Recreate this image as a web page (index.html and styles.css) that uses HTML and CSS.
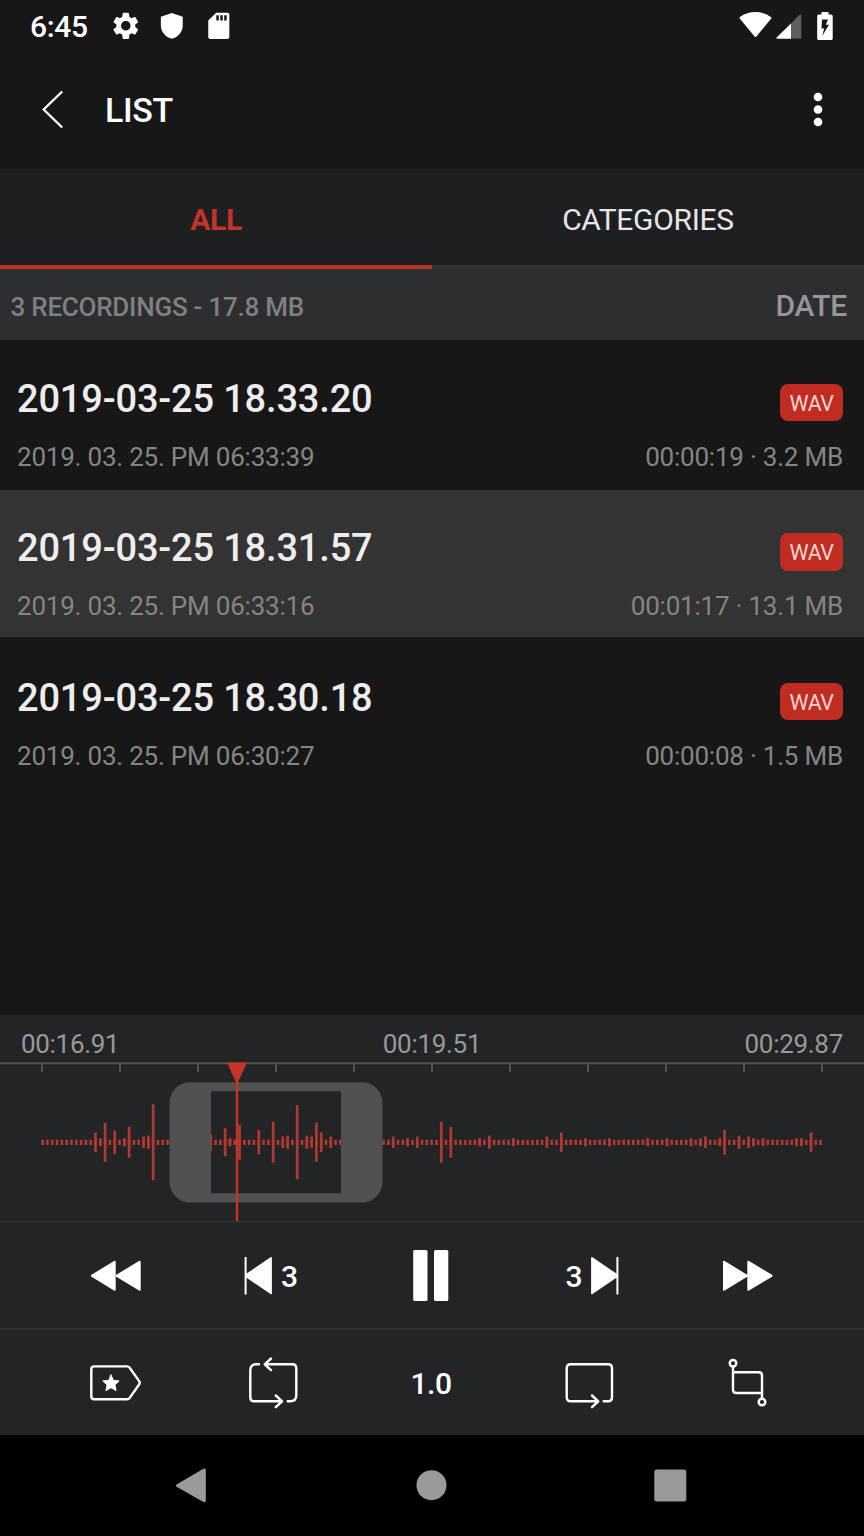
FILE: index.html
```html
<!DOCTYPE html>
<html lang="en">
<head>
<meta charset="utf-8">
<title>Recordings</title>
<link rel="stylesheet" href="styles.css">
</head>
<body>
<div class="status">
  <span class="clock">6:45</span>
  <svg class="sicon" viewBox="0 0 24 24"><path d="M19.14 12.94c.04-.3.06-.61.06-.94 0-.32-.02-.64-.07-.94l2.03-1.58c.18-.14.23-.41.12-.61l-1.92-3.32c-.12-.22-.37-.29-.59-.22l-2.39.96c-.5-.38-1.03-.7-1.62-.94L14.4 2.81c-.04-.24-.24-.81-.48-.81h-3.84c-.24 0-.43.57-.47.81L9.25 5.35c-.59.24-1.13.57-1.62.94l-2.39-.96c-.22-.08-.47 0-.59.22L2.740 8.870c-.12.21-.08.47.12.61l2.03 1.58c-.05.3-.09.63-.09.94s.02.64.07.94l-2.03 1.58c-.18.14-.23.41-.12.61l1.92 3.32c.12.22.37.29.59.22l2.39-.96c.5.38 1.03.7 1.62.94l.36 2.54c.05.24.24.81.48.81h3.84c.24 0 .44-.57.47-.81l.36-2.54c.59-.24 1.13-.56 1.62-.94l2.39.96c.22.08.47 0 .59-.22l1.92-3.32c.12-.22.07-.47-.12-.61l-2.01-1.58zM12 15.6c-1.98 0-3.6-1.62-3.6-3.6s1.62-3.6 3.6-3.6 3.6 1.62 3.6 3.6-1.62 3.6-3.6 3.6z"/></svg>
  <svg class="sicon" viewBox="0 0 24 24"><path d="M12 2.200l8.300 3v6.300c0 5-3.400 9-8.300 10.400-4.900-1.400-8.300-5.400-8.300-10.400V5.200z"/></svg>
  <svg class="sicon" viewBox="0 0 24 24"><path fill-rule="evenodd" d="M18.600 2H10L4 8v12.600c0 .8.600 1.400 1.400 1.400h13.200c.8 0 1.400-.6 1.400-1.400V3.400c0-.8-.6-1.400-1.400-1.400zM12 8h-1.900V4H12zm3 0h-1.900V4H15zm3 0h-1.900V4H18z"/></svg>
  <span class="spacer"></span>
  <svg class="wifi" viewBox="0 0 33 28"><path d="M.8 6Q8 1 16.500 1T32.200 6.200q.4.700 0 1.300L17.600 25.300q-1.100 1.200-2.200 0L.7 7.500Q.3 6.700.8 6z"/></svg>
  <svg class="signal" viewBox="0 0 26 28"><path d="M15 11.500L23.500 2.700q1.800-1.400 1.800.7V26.500H15z" fill="#5e5e5e"/><path d="M15 11.500L.6 25.400q-.5 1.300.8 1.300H15z"/></svg>
  <svg class="battery" viewBox="0 0 18 30"><path fill-rule="evenodd" d="M5.500 1h7v2.500h2.700q1.500 0 1.500 1.500v22.500q0 1.500-1.500 1.500H2.700q-1.500 0-1.500-1.500V5q0-1.500 1.500-1.500h2.800zM6 8.500L5.500 17.500H8.200L6.200 25 13 13.800H9.900L12 8.500z"/></svg>
</div>
<header class="appbar">
  <svg class="back" viewBox="0 0 24 40"><path d="M22.200 1.500L3.700 19.500 22.200 37.500"/></svg>
  <h1>LIST</h1>
  <span class="spacer"></span>
  <svg class="more" viewBox="0 0 10 36"><circle cx="5" cy="5" r="4.300"/><circle cx="5" cy="17.500" r="4.300"/><circle cx="5" cy="30" r="4.300"/></svg>
</header>
<nav class="tabs">
  <div class="tab active">ALL</div>
  <div class="tab">CATEGORIES</div>
</nav>
<div class="summary"><span>3 RECORDINGS - 17.8 MB</span><span class="sort">DATE</span></div>
<main class="list">
  <div class="row">
    <div class="line"><span class="name">2019-03-25 18.33.20</span><span class="badge">WAV</span></div>
    <div class="line meta"><span>2019. 03. 25. PM 06:33:39</span><span>00:00:19 · 3.2 MB</span></div>
  </div>
  <div class="row selected">
    <div class="line"><span class="name">2019-03-25 18.31.57</span><span class="badge">WAV</span></div>
    <div class="line meta"><span>2019. 03. 25. PM 06:33:16</span><span>00:01:17 · 13.1 MB</span></div>
  </div>
  <div class="row">
    <div class="line"><span class="name">2019-03-25 18.30.18</span><span class="badge">WAV</span></div>
    <div class="line meta"><span>2019. 03. 25. PM 06:30:27</span><span>00:00:08 · 1.5 MB</span></div>
  </div>
</main>
<section class="player">
  <div class="times"><span>00:16.91</span><span>00:19.51</span><span>00:29.87</span></div>
  <svg class="wave" viewBox="0 0 864 159">
    <path d="M0 1.200H864" stroke="#505153" stroke-width="2"/>
    <path d="M42 2v8M120 2v8M198 2v8M276 2v8M354 2v8M432 2v8M510 2v8M588 2v8M666 2v8M744 2v8M822 2v8" stroke="#505153" stroke-width="2"/>
    <!-- quiet samples, then the louder ones at one unit per sample -->
    <g transform="translate(42.700 80.300) scale(4.802 1)" class="bars">
      <path d="M-.28 0H162.300" stroke-width="5.200" stroke-dasharray=".54 .46"/>
      <path stroke-width=".56" d="M11-9.700v19.400M12-4v8M13-19.500v39M15-11.700v23.400M17-4v8M18-15.500v31M21-5.700v11.400M22-6.500v13M23-38v76M35-8.500v17M38-14v28M39-4v8M41-17.500v35M45-12.300v24.600M48-20.500v41M50-5.700v11.400M51-6.500v13M53-37v74M55-6.500v13M56-5.700v11.400M57-19.500v39M58-9.700v19.400M60-5.700v11.400M73-5.700v11.400M76-4v8M78-5.700v11.400M83-20.500v41M85-15.500v31M91-4v8M93-6.500v13M98-4v8M105-5.700v11.400M108-9.700v19.400M113-4v8M118-4v8M126-4v8M130-4v8M135-4v8M137-4v8M138-5.700v11.400M141-4v8M142-12.500v25M145-6.500v13M147-5.700v11.400M148-4v8M150-4v8M157-4v8M158-4v8M160-9.700v19.400"/>
    </g>
    <path fill="#515151" fill-rule="evenodd" d="M190 20.300H362a20.500 20.500 0 0 1 20.500 20.500V120a20.500 20.500 0 0 1-20.500 20.500H190a20.500 20.500 0 0 1-20.500-20.500V40.800A20.500 20.500 0 0 1 190 20.300zM211 29.200V131.300H341V29.200z"/>
    <path fill="#c63427" d="M227 .5h20L238.200 20V159h-2.400V20z"/>
  </svg>
  <div class="controls">
    <div class="btn"><svg viewBox="0 0 80 80"><path d="M15.500 38.800L38 25q1.700-.7 1.700 1V53.500q0 1.700-1.700 1L15.500 40.700q-1.200-1 0-1.900zM40.300 38.800L63 25q1.700-.7 1.700 1V53.500q0 1.700-1.700 1L40.300 40.700q-1.200-1 0-1.900z"/></svg></div>
    <div class="btn skip-back"><svg class="skip" viewBox="0 0 28 80"><path d="M.6 21H2.600V37.600L26.500 21.200q1.400-.6 1.400.8V57.200q0 1.400-1.400.8L2.600 41.800V58.500H.6z"/></svg><span>3</span></div>
    <div class="btn"><svg viewBox="0 0 80 80"><rect x="21.200" y="14" width="14.300" height="51" rx="1.500"/><rect x="42" y="14" width="14.300" height="51" rx="1.500"/></svg></div>
    <div class="btn skip-next"><span>3</span><svg class="skip" viewBox="0 0 28 80"><path d="M27.400 21H25.400V37.600L1.500 21.200Q.1 20.600.1 22V57.200q0 1.400 1.400.8L25.400 41.800V58.500h2z"/></svg></div>
    <div class="btn"><svg viewBox="0 0 80 80"><path d="M64 38.800L41 25q-1.700-.7-1.700 1V53.500q0 1.700 1.700 1L64 40.700q1.200-1 0-1.900zM39.200 38.800L16.700 25q-1.700-.7-1.700 1V53.500q0 1.700 1.700 1L39.200 40.700q1.200-1 0-1.900z"/></svg></div>
  </div>
  <div class="controls tools">
    <div class="btn"><svg class="stroke" viewBox="0 0 80 80"><path d="M18.300 23.400H51q1.700 0 2.700 1.300L63.300 38.400q.9 1.400 0 2.800L53.700 54.900q-1 1.300-2.700 1.300H18.300q-3 0-3-3V26.400q0-3 3-3z"/><path class="solid" d="M35 32l2.400 5.300 5.800.7-4.300 3.900 1.200 5.700-5.100-2.900-5.100 2.900 1.200-5.700-4.300-3.900 5.800-.7z"/></svg></div>
    <div class="btn"><svg class="stroke" viewBox="0 0 80 80"><path d="M25 21.300h-2.700q-6 0-6 6V54.300q0 4 4 4H48M37 15.500L30.700 21.300 37 27.100M31 21.300H58.300q4 0 4 4V52.300q0 6-6 6H53.700M41.800 52.500L48.100 58.300 41.800 64.100"/></svg></div>
    <div class="btn speed"><span>1.0</span></div>
    <div class="btn"><svg class="stroke" viewBox="0 0 80 80"><path d="M48 58.300H20.700q-4 0-4-4V25.300q0-4 4-4H58q4 0 4 4V54.300q0 4-4 4H53.700M42 52.500L48.300 58.300 42 64.100"/></svg></div>
    <div class="btn"><svg class="stroke" viewBox="0 0 80 80"><circle cx="25" cy="20.300" r="3.300"/><circle cx="54" cy="59" r="3.300"/><path d="M25 23.600V46.800q0 3.200 3.200 3.200H54M25 29.300H50.800q3.200 0 3.200 3.200V55.700"/></svg></div>
  </div>
</section>
<footer class="navbar">
  <svg viewBox="0 0 34 36"><path d="M2.500 17.600L29.500 1.700q2.300-.8 2.300 1.500V33.500q0 2.200-2.300 1.500L2.500 19.800q-1.500-1.100 0-2.200z"/></svg>
  <svg viewBox="0 0 34 36"><circle cx="17.500" cy="18.200" r="15"/></svg>
  <svg viewBox="0 0 34 36"><rect x="1.300" y="2.500" width="32" height="32" rx="2.500"/></svg>
</footer>
</body>
</html>
```
FILE: styles.css
```css
* { box-sizing: border-box; }
body {
  margin: 0;
  width: 864px;
  height: 1536px;
  display: flex;
  flex-direction: column;
  overflow: hidden;
  background: #171717;
  color: #fff;
  font-family: Roboto, "Liberation Sans", sans-serif;
}
svg { display: block; fill: #fff; flex: none; }
.spacer { flex: 1; }

.status { height: 50px; flex: none; display: flex; align-items: center; padding: 1px 30px 0 30px; }
.clock { font-size: 30px; font-weight: 500; width: 80px; line-height: 36px; padding-top: 2px; white-space: nowrap; letter-spacing: -.3px; }
.sicon { width: 31.600px; height: 31.600px; margin-right: 14.800px; }
.wifi { width: 33px; height: 28px; margin-right: 4px; margin-top: -1px; }
.signal { width: 26px; height: 28px; margin-right: 14px; }
.battery { width: 18px; height: 30px; }

.appbar { height: 119px; flex: none; display: flex; align-items: center; padding: 0 41px 0 40px; }
.back { width: 24px; height: 40px; fill: none; stroke: #fff; stroke-width: 2.300; }
.appbar h1 { margin: 1px 0 0 41px; font-size: 34px; font-weight: 500; line-height: 40px; letter-spacing: -.4px; }
.more { width: 10px; height: 36px; }

.tabs { height: 100px; flex: none; display: grid; grid-template-columns: 1fr 1fr; background: #1d1f21; }
.tab {
  display: flex;
  align-items: center;
  justify-content: center;
  padding-top: 4px;
  font-size: 30px;
  letter-spacing: -.3px;
  color: #e6e6e6;
  border-bottom: 4px solid #333436;
}
.tab.active { font-weight: 700; color: #c13428; border-bottom-color: #b83227; }

.summary {
  height: 71px;
  flex: none;
  display: flex;
  align-items: center;
  justify-content: space-between;
  padding: 4px 17px 0 10.500px;
  background: #2d2e30;
  color: #7f8081;
  font-size: 26px;
  font-weight: 500;
  letter-spacing: -.24px;
}
.sort { font-size: 30px; color: #959697; padding-bottom: 3px; }

.list { flex: 1; }
.row { height: 149.500px; padding: 38.900px 21px 0 17px; border-bottom: 2px solid #171717; }
.row.selected { background: #333333; background-clip: padding-box; }
.line { display: flex; justify-content: space-between; height: 58px; align-items: flex-start; }
.name { font-size: 38px; line-height: 40px; font-weight: 500; color: #ededed; letter-spacing: -.17px; }
.badge {
  width: 63px;
  height: 37.500px;
  margin-top: 5px;
  border-radius: 8px;
  background: #c12c22;
  color: #f3d5cd;
  font-size: 21.500px;
  letter-spacing: -.5px;
  line-height: 39px;
  text-align: center;
}
.meta { font-size: 26px; line-height: 40px; height: 40px; color: #858585; letter-spacing: -.21px; }

.player { height: 420px; flex: none; background: #232426; }
.times { height: 47px; padding: 9px 21px 0; display: flex; justify-content: space-between; font-size: 26px; line-height: 40px; letter-spacing: -.3px; color: #98999a; }
.wave { width: 864px; height: 159px; }
.bars path { stroke: #b03a32; fill: none; }
.controls { height: 107px; display: grid; grid-template-columns: repeat(5, 158px); padding: 1px 37px 0; border-top: 2px solid #2f3032; }
.btn { display: flex; align-items: center; justify-content: center; font-size: 30px; font-weight: 500; letter-spacing: -.5px; }
.btn svg { width: 80px; height: 80px; }
.btn .skip { width: 28px; }
.btn span { padding-top: 1px; }
.skip-back { gap: 8.500px; padding-right: 6px; }
.skip-next { gap: 8.500px; padding-left: 4px; }
.speed { padding-right: 2px; }
.btn .stroke { fill: none; stroke: #fff; stroke-width: 2.400; stroke-linecap: round; stroke-linejoin: round; }
.stroke .solid { fill: #fff; stroke-width: 1; }

.navbar { height: 101px; flex: none; display: flex; justify-content: space-between; padding: 32px 177px 0 174px; background: #000; }
.navbar svg { width: 34px; height: 36px; fill: #9a9a9a; }
```
